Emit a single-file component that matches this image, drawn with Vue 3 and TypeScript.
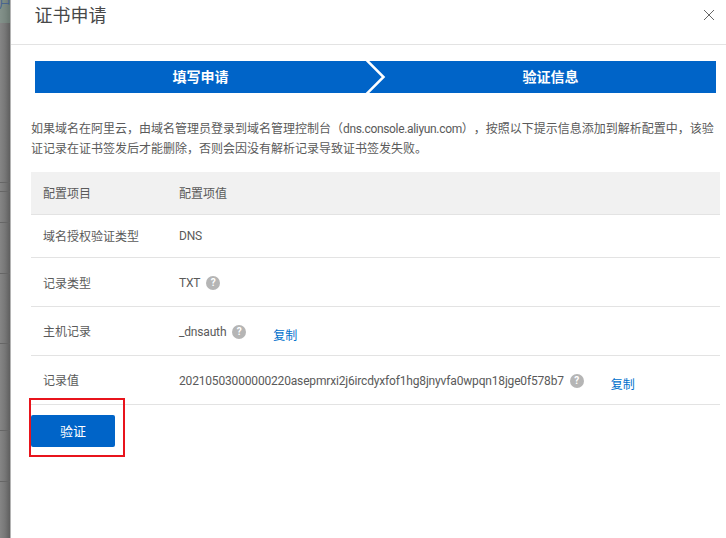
<script setup lang="ts">
interface Row { label: string; value: string; help?: boolean; copy?: boolean; cls: string }
const rows: Row[] = [
  { label: '域名授权验证类型', value: 'DNS', cls: 'r1' },
  { label: '记录类型', value: 'TXT', help: true, cls: 'r2' },
  { label: '主机记录', value: '_dnsauth', help: true, copy: true, cls: 'r2 r3' },
  { label: '记录值', value: '20210503000000220asepmrxi2j6ircdyxfof1hg8jnyvfa0wpqn18jge0f578b7', help: true, copy: true, cls: 'r2 r3' }
]
const backdropLines: number[] = [182, 191, 222, 273, 343, 430, 481]
</script>

<template>
  <div class="page">
    <div class="backdrop">
      <span class="behind">客户</span>
      <i v-for="y in backdropLines" :key="y" class="bline" :style="{ top: y + 'px' }"></i>
    </div>
    <div class="modal">
      <header class="head">
        <h1 class="title">证书申请</h1>
        <svg class="close" width="12" height="12" viewBox="0 0 12 12"><path d="M1 1L11 11M11 1L1 11" stroke="#666" stroke-width="1" fill="none" /></svg>
      </header>
      <div class="body">
        <div class="steps">
          <div class="step">填写申请</div>
          <svg class="chev" width="22" height="32" viewBox="0 0 22 32"><path d="M1.500 -1L18.500 16L1.500 33" stroke="#fff" stroke-width="2.500" fill="none" /></svg>
          <div class="step">验证信息</div>
        </div>
        <p class="desc">如果域名在阿里云，由域名管理员登录到域名管理控制台（<span class="latin">dns.console.aliyun.com</span>），按照以下提示信息添加到解析配置中，该验证记录在证书签发后才能删除，否则会因没有解析记录导致证书签发失败。</p>
        <div class="table">
          <div class="row thead">
            <div class="c1">配置项目</div>
            <div>配置项值</div>
          </div>
          <div v-for="r in rows" :key="r.label" class="row" :class="r.cls">
            <div class="c1">{{ r.label }}</div>
            <div class="val">
              <span class="txt">{{ r.value }}</span>
              <span v-if="r.help" class="help">?</span>
              <a v-if="r.copy" class="copy">复制</a>
            </div>
          </div>
        </div>
        <div class="actions">
          <button class="btn" type="button">验证</button>
          <div class="mark"></div>
        </div>
      </div>
    </div>
  </div>
</template>

<style scoped>
.page { display: flex; width: 726px; height: 538px; overflow: hidden; font-family: Roboto, "Noto Sans CJK SC", sans-serif; font-size: 12px; color: #5a5a5a; text-spacing-trim: space-all; }
.backdrop { width: 10px; flex: none; position: relative; overflow: hidden; background: linear-gradient(90deg, #858585, #777 50%, #5f5f5f); }
.backdrop::before { content: ""; position: absolute; left: 0; right: 0; top: 0; height: 23px; background: rgba(130, 170, 150, 0.35); }
.behind { position: absolute; right: -1px; top: -6px; width: 24px; font-size: 12px; color: #3f5f90; white-space: nowrap; }
.bline { position: absolute; left: 0; right: 0; height: 1px; background: #666; }
.modal { flex: 1; background: #fff; border-left: 1px solid #b4b4b4; min-width: 0; }
.head { height: 45px; box-sizing: border-box; display: flex; align-items: center; justify-content: space-between; padding: 0 11px 12px 23.5px; border-bottom: 1px solid #e3e3e3; }
.title { margin: 0; font-size: 18px; font-weight: 400; color: #484848; line-height: 30px; }
.close { margin-bottom: 2px; }
.body { padding: 16px 6px 0 20px; }
.steps { display: flex; align-items: stretch; height: 32px; margin: 0 4px; background: #0064c8; overflow: hidden; }
.step { flex: 1; text-align: center; line-height: 32px; color: #fff; font-size: 14px; font-weight: 700; }
.chev { flex: none; margin: 0 -2px 0 -1px; }
.desc { margin: 26px 0 0; line-height: 20px; width: 692px; }
.latin { letter-spacing: -0.33px; }
.table { margin-top: 13px; }
.row { display: flex; align-items: center; padding-left: 12px; border-bottom: 1px solid #e3e3e3; box-sizing: border-box; }
.thead { height: 43px; background: #f1f1f1; padding-bottom: 1px; }
.r1 { height: 43px; padding-bottom: 1px; }
.r2 { height: 49px; }
.r2 .val { padding-top: 2px; }
.r3 .c1 { padding-bottom: 2px; }
.c1 { width: 136px; flex: none; }
.val { display: flex; align-items: center; white-space: nowrap; }
.txt { letter-spacing: -0.17px; }
.help { width: 14px; height: 14px; margin-left: 6px; border-radius: 50%; background: #b5b5b5; color: #fff; font-size: 10px; font-weight: 700; line-height: 14px; text-align: center; }
.copy { color: #0070cc; margin-left: 27px; position: relative; top: 2px; }
.actions { position: relative; margin-top: 10px; }
.btn { display: block; width: 84px; height: 32px; border: 0; border-radius: 2px; background: #0064c8; color: #fff; font: inherit; font-size: 13px; padding: 0 0 2px; }
.mark { position: absolute; left: -2px; top: -17px; width: 92px; height: 55px; border: 2px solid #e8141c; pointer-events: none; }
</style>
